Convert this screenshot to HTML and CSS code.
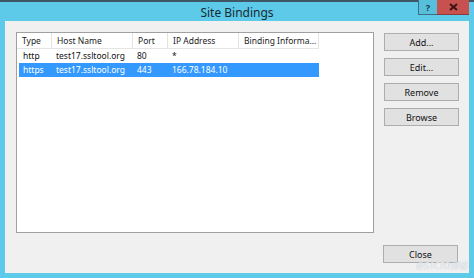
FILE: index.html
```html
<!DOCTYPE html>
<html lang="en">
    <head>
        <meta charset="UTF-8">
        <meta name="viewport" content="width=device-width, initial-scale=1.0">
        <title>Site Bindings</title>
        <link rel="stylesheet" href="styles.css">
    </head>

    <body>

        <div class="window">

            <!-- title bar -->
            <div class="titlebar">
                <span class="title">Site Bindings</span>
                <div class="caption-buttons">
                    <span class="cap-help">?</span>
                    <span class="cap-close">
                        <svg width="9" height="8" viewBox="0 0 9 8">
                            <path d="M1 1 L8 7 M8 1 L1 7" stroke="#3a1414" stroke-width="2"/>
                        </svg>
                    </span>
                </div>
            </div>

            <!-- client area -->
            <div class="client">
                <div class="main">
                    <div class="listview">
                        <div class="row header">
                            <div class="col c-type">Type</div>
                            <div class="col c-host">Host Name</div>
                            <div class="col c-port">Port</div>
                            <div class="col c-ip">IP Address</div>
                            <div class="col c-info">Binding Informa...</div>
                        </div>
                        <div class="row">
                            <div class="col c-type">http</div>
                            <div class="col c-host">test17.ssltool.org</div>
                            <div class="col c-port">80</div>
                            <div class="col c-ip">*</div>
                            <div class="col c-info"></div>
                        </div>
                        <div class="row selected">
                            <div class="col c-type">https</div>
                            <div class="col c-host">test17.ssltool.org</div>
                            <div class="col c-port">443</div>
                            <div class="col c-ip">166.78.184.10</div>
                            <div class="col c-info"></div>
                        </div>
                    </div>

                    <div class="side-buttons">
                        <button>Add...</button>
                        <button>Edit...</button>
                        <button>Remove</button>
                        <button>Browse</button>
                    </div>
                </div>

                <div class="footer">
                    <button>Close</button>
                </div>
            </div>

            <span class="watermark">@51CTO博客</span>
        </div>

    </body>
</html>
```

FILE: styles.css
```css
body {
    margin: 0;
    font-family: "Noto Sans", "Noto Sans CJK SC", sans-serif;
}
.window {
    position: relative;
    width: 474px;
    height: 278px;
    box-sizing: border-box;
    background-color: #5ccae8;
    border-top: 2px solid #3f5866;
    display: flex;
    flex-direction: column;
}
.titlebar {
    height: 19px;
    display: flex;
    justify-content: center;
    align-items: center;
    position: relative;
}
.title {
    font-size: 12px;
    color: #1b2a33;
    margin-top: 1px;
}
.caption-buttons {
    position: absolute;
    top: -2px;
    right: 5px;
    display: flex;
    height: 15px;
}
.cap-help {
    width: 18px;
    background-color: #57bedc;
    border-left: 1px solid #3d6f80;
    border-bottom: 1px solid #3d6f80;
    color: #143a4a;
    font-size: 9px;
    font-weight: bold;
    text-align: center;
    line-height: 15px;
}
.cap-close {
    width: 32px;
    background-color: #c7514f;
    border-bottom: 1px solid #8a3b3a;
    display: flex;
    justify-content: center;
    align-items: center;
}
.client {
    flex: 1;
    margin: 0 5px 5px 5px;
    background-color: #f0f0f0;
    box-sizing: border-box;
    padding: 11px 10px 10px 11px;
    display: flex;
    flex-direction: column;
    justify-content: space-between;
}
.main {
    display: flex;
    gap: 10px;
}
.listview {
    width: 358px;
    height: 201px;
    box-sizing: border-box;
    background-color: #fff;
    border: 1px solid #a0a0a0;
    font-size: 8.5px;
    color: #111;
}
.row {
    display: flex;
    height: 14px;
    line-height: 14px;
    margin-left: 2px;
    width: 300px;
}
.row.header {
    height: 15px;
    line-height: 15px;
    margin-left: 0;
    width: 302px;
    border-bottom: 1px solid #e5e5e5;
    color: #222;
}
.row.selected {
    background-color: #3399ff;
    color: #fff;
}
.col {
    box-sizing: border-box;
    padding-left: 4px;
    white-space: nowrap;
    overflow: hidden;
}
.header .col {
    border-right: 1px solid #e3e3e3;
    padding-left: 5px;
}
.c-type { width: 33px; }
.header .c-type { width: 35px; }
.c-host { width: 81px; }
.c-port { width: 35px; }
.c-ip { width: 71px; }
.c-info { width: 80px; }
.side-buttons {
    display: flex;
    flex-direction: column;
    gap: 7px;
    padding-top: 1px;
}
button {
    width: 75px;
    height: 18px;
    padding: 0;
    font-family: "Noto Sans", sans-serif;
    font-size: 9px;
    color: #111;
    background-color: #e1e1e1;
    border: 1px solid #adadad;
}
.footer {
    display: flex;
    justify-content: flex-end;
    padding-right: 1px;
}
.watermark {
    position: absolute;
    right: 6px;
    bottom: 6px;
    font-size: 9px;
    font-style: italic;
    color: rgba(255, 255, 255, 0.75);
    text-shadow: 0 0 1px rgba(120, 140, 160, 0.6);
}
```
